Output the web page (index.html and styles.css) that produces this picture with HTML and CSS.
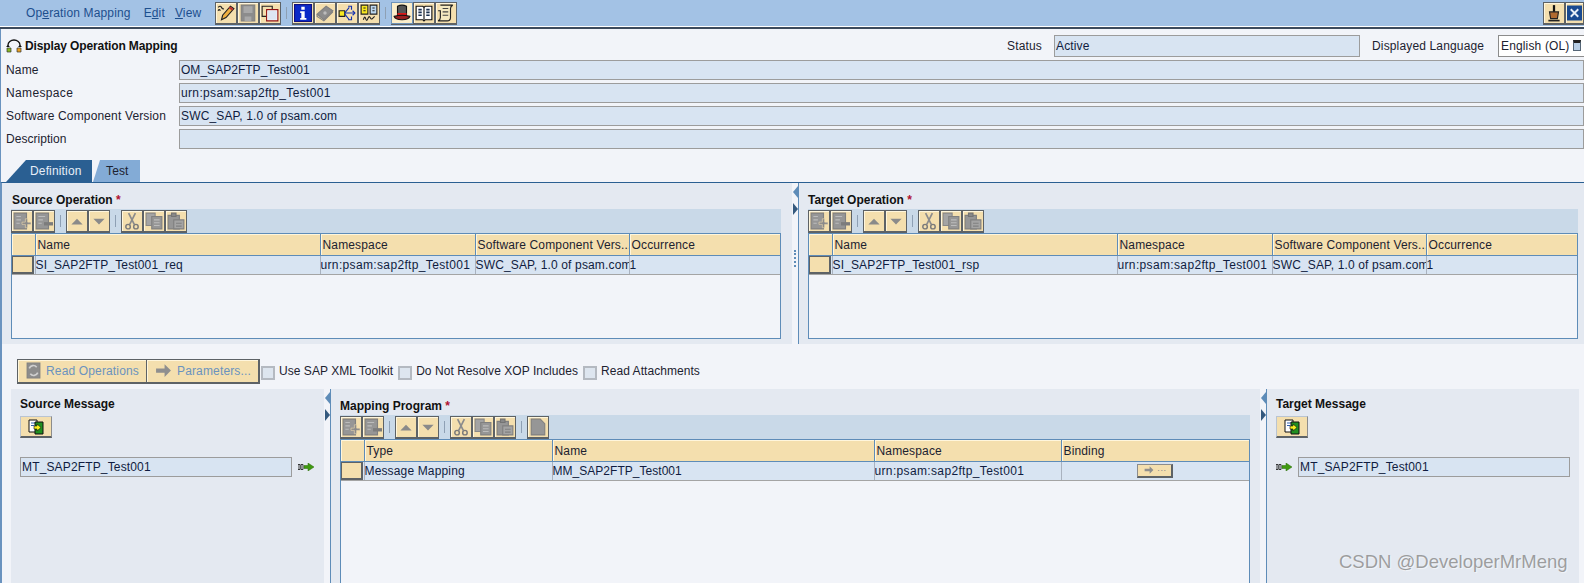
FILE: index.html
```html
<!DOCTYPE html>
<html lang="en">
<head>
    <meta charset="UTF-8">
    <title>Display Operation Mapping</title>
    <link rel="stylesheet" href="styles.css">
</head>
<body>
    <!-- Shared icons -->
    <svg class="defs" width="0" height="0">
        <symbol id="i-edit" viewBox="0 0 16 16">
            <path d="M1 3q2-2 3 0t2 1M1 6q1-2 2 0" fill="none" stroke="#222" stroke-width="1"/>
            <path d="M4 14l1-4 7-8 3 2-7 8z" fill="#f0b040" stroke="#222" stroke-width="1"/>
            <path d="M11 3l3 2" stroke="#c03030" stroke-width="2"/>
        </symbol>
        <symbol id="i-save" viewBox="0 0 16 16">
            <path d="M2 1h12v14H2z" fill="#8c8c8c" stroke="#808080"/>
            <path d="M4 2h8v6H4zM5 11h6v4H5z" fill="#a8a8a8"/>
        </symbol>
        <symbol id="i-pages" viewBox="0 0 16 16">
            <path d="M1 2h9v9H1z" fill="#f4dfae" stroke="#222"/>
            <path d="M5 5h10v10H5z" fill="#fff" stroke="#901010"/>
            <path d="M6 6h8v8H6z" fill="#dde6f2"/>
        </symbol>
        <symbol id="i-info" viewBox="0 0 16 16">
            <path d="M0 0h16v16H0z" fill="#101080"/>
            <path d="M1 1h14v14H1z" fill="#0a2ac8"/>
            <path d="M6.500 2.500h3v2.500h-3zM5.500 6.500h4v6h1.500v1.500H5.500v-1.500h1v-4.500h-1z" fill="#fff"/>
        </symbol>
        <symbol id="i-book-off" viewBox="0 0 16 16">
            <path d="M1 9l8-7 6 4-8 8z" fill="#8c8c8c" stroke="#808080"/>
            <path d="M1 9v2l6 4 8-8" fill="none" stroke="#808080"/>
            <circle cx="8" cy="8" r="1.500" fill="#bbb"/>
        </symbol>
        <symbol id="i-flow" viewBox="0 0 16 16">
            <path d="M1 6h5v5H1z" fill="#f8e820" stroke="#222"/>
            <path d="M6 8l4-5M6 8h9M6 9l4 5" fill="none" stroke="#1030b0"/>
            <path d="M9 2h3v3M13 6l2 2-2 2M9 14h3v-3" fill="none" stroke="#1030b0"/>
        </symbol>
        <symbol id="i-notes" viewBox="0 0 16 16">
            <path d="M1 1h6v8H1z" fill="#f8e820" stroke="#222"/>
            <path d="M9 1h6v8H9z" fill="#bcd8f0" stroke="#222"/>
            <path d="M3 3.500h2M3 6h2M11 3.500h2M11 6h2" stroke="#222"/>
            <path d="M3 14q1-4 2-1t2 0 2-1 2 1 2-2" fill="none" stroke="#222"/>
        </symbol>
        <symbol id="i-hat" viewBox="0 0 16 16">
            <path d="M4 2q4-2 8 0v8H4z" fill="#555" stroke="#111"/>
            <path d="M4 8h8v2.500H4z" fill="#d81818"/>
            <path d="M1 11q7-2 14 0-1 3-7 3t-7-3z" fill="#9a2020" stroke="#111"/>
        </symbol>
        <symbol id="i-open-book" viewBox="0 0 16 16">
            <path d="M1 2h6l1 1 1-1h6v12H9l-1 1-1-1H1z" fill="#fff" stroke="#111"/>
            <path d="M8 3v11" stroke="#111"/>
            <path d="M3 5h3M3 7.500h3M3 10h3M10 5h3M10 7.500h3M10 10h3" stroke="#1a3050" stroke-width="1.500"/>
        </symbol>
        <symbol id="i-scroll" viewBox="0 0 16 16">
            <path d="M3 1h11q-2 1-2 3v8q0 3-3 3H1q2-1 2-3V6H1" fill="#f4e8c0" stroke="#222"/>
            <path d="M5 4h5M5 7h5M5 10h5" stroke="#444"/>
        </symbol>
        <symbol id="i-row-add" viewBox="0 0 16 16">
            <path d="M1 1h11v14H1z" fill="#969696" stroke="#808080"/>
            <path d="M3 4h4M3 7h4M3 10h3" stroke="#bcbcbc"/>
            <path d="M11 6h2v3h3v2h-3v3h-2v-3H8V9h3z" fill="#8a8a8a" stroke="#f4dfae" stroke-width=".5"/>
        </symbol>
        <symbol id="i-row-del" viewBox="0 0 16 16">
            <path d="M1 1h11v14H1z" fill="#969696" stroke="#808080"/>
            <path d="M3 4h6M3 7h4M3 10h3" stroke="#bcbcbc"/>
            <path d="M8 9h8v3H8z" fill="#7c7c7c"/>
        </symbol>
        <symbol id="i-up" viewBox="0 0 16 16"><path d="M3 11l5-5 5 5z" fill="#8a8a8a"/></symbol>
        <symbol id="i-down" viewBox="0 0 16 16"><path d="M3 6h10l-5 5z" fill="#8a8a8a"/></symbol>
        <symbol id="i-cut" viewBox="0 0 16 16">
            <path d="M5 1l5 10M11 1L6 11" fill="none" stroke="#8c8c8c" stroke-width="1.500"/>
            <circle cx="4.500" cy="13" r="2" fill="none" stroke="#7a7a7a" stroke-width="1.300"/>
            <circle cx="11.500" cy="13" r="2" fill="none" stroke="#7a7a7a" stroke-width="1.300"/>
        </symbol>
        <symbol id="i-copy" viewBox="0 0 16 16">
            <path d="M1 1h8v11H1z" fill="#a4a4a4" stroke="#888"/>
            <path d="M6 4h9v11H6z" fill="#969696" stroke="#808080"/>
            <path d="M8 7h5M8 9.500h5M8 12h5" stroke="#bcbcbc"/>
        </symbol>
        <symbol id="i-paste" viewBox="0 0 16 16">
            <path d="M1 3h10v12H1z" fill="#969696" stroke="#808080"/>
            <path d="M4 1h4v3H4z" fill="#888" stroke="#747474"/>
            <path d="M6 7h9v8H6z" fill="#a4a4a4" stroke="#808080"/>
            <path d="M8 10h5M8 12.500h5" stroke="#808080"/>
        </symbol>
        <symbol id="i-doc" viewBox="0 0 16 16">
            <path d="M2 1h8l4 4v10H2z" fill="#969696" stroke="#808080"/>
        </symbol>
        <symbol id="i-pin" viewBox="0 0 16 16">
            <path d="M7 1h2v6H7z" fill="#111"/>
            <path d="M4 7h8l-1 6H5z" fill="#b06a30" stroke="#222"/>
            <path d="M3 14h10v1.500H3z" fill="#222"/>
        </symbol>
        <symbol id="i-close" viewBox="0 0 16 16">
            <path d="M0 0h16v16H0z" fill="#1a4a90"/>
            <path d="M4 4l8 8M12 4l-8 8" stroke="#e8eef6" stroke-width="2"/>
        </symbol>
        <symbol id="i-read" viewBox="0 0 16 16">
            <path d="M2 1h12v14H2z" fill="#8c8c8c" stroke="#808080"/>
            <path d="M4 6a4 4 0 0 1 7-1M12 10a4 4 0 0 1-7 1" fill="none" stroke="#d0d0d0" stroke-width="1.500"/>
        </symbol>
        <symbol id="i-arrow-off" viewBox="0 0 16 16">
            <path d="M1 6h8V2l6 6-6 6v-4H1z" fill="#8f8f8f"/>
        </symbol>
        <symbol id="i-import" viewBox="0 0 16 16">
            <path d="M1 1h8v12H1z" fill="#fff" stroke="#111"/>
            <path d="M3 4h4M3 6.500h3" stroke="#3060b0"/>
            <path d="M7 3h8v12H7z" fill="#209020" stroke="#111"/>
            <path d="M6 7h3V5l4 3.500L9 12v-2H6z" fill="#f8f020" stroke="#111" stroke-width=".6"/>
        </symbol>
        <symbol id="i-go" viewBox="0 0 16 8">
            <path d="M0 1.500h2v5H0zM3 1.500h2v5H3z" fill="none" stroke="#111" stroke-width=".8"/>
            <path d="M6 2.500h4V0l6 4-6 4V5.500H6z" fill="#3f9a10" stroke="#2a6a08" stroke-width=".5"/>
        </symbol>
    </svg>

    <!-- Menu bar -->
    <div class="menubar">
        <div class="menu">
            <a class="menu-item">Op<u>e</u>ration Mapping</a>
            <a class="menu-item">E<u>d</u>it</a>
            <a class="menu-item"><u>V</u>iew</a>
        </div>
        <div class="tb-row">
            <div class="tb-group">
                <span class="tb-btn"><svg><use href="#i-edit"/></svg></span>
                <span class="tb-btn"><svg><use href="#i-save"/></svg></span>
                <span class="tb-btn"><svg><use href="#i-pages"/></svg></span>
            </div>
            <span class="tb-sep"></span>
            <div class="tb-group">
                <span class="tb-btn"><svg><use href="#i-info"/></svg></span>
                <span class="tb-btn"><svg><use href="#i-book-off"/></svg></span>
                <span class="tb-btn"><svg><use href="#i-flow"/></svg></span>
                <span class="tb-btn"><svg><use href="#i-notes"/></svg></span>
            </div>
            <span class="tb-sep"></span>
            <div class="tb-group">
                <span class="tb-btn tb-btn-on"><svg><use href="#i-hat"/></svg></span>
                <span class="tb-btn"><svg><use href="#i-open-book"/></svg></span>
                <span class="tb-btn"><svg><use href="#i-scroll"/></svg></span>
            </div>
        </div>
        <div class="tb-group tb-window">
            <span class="tb-btn"><svg><use href="#i-pin"/></svg></span>
            <span class="tb-btn"><svg><use href="#i-close"/></svg></span>
        </div>
    </div>

    <div class="content">
        <!-- Object header -->
        <div class="title-row">
            <svg class="title-icon" viewBox="0 0 16 14">
                <path d="M2 8V6a6 5 0 0 1 12 0v2" fill="none" stroke="#111" stroke-width="1.300"/>
                <path d="M0 8l2-2 2 2z" fill="#111"/>
                <path d="M12 8l2-2 2 2z" fill="#111"/>
                <path d="M1 9h4v4H1z" fill="#8ab820" stroke="#333" stroke-width=".7"/>
                <path d="M11 9h4v4h-4z" fill="#e8a020" stroke="#333" stroke-width=".7"/>
            </svg>
            <span class="title">Display Operation Mapping</span>
            <span class="status-label">Status</span>
            <div class="field field-status">Active</div>
            <span class="lang-label">Displayed Language</span>
            <div class="lang-select">English (OL)<span class="lang-btn"></span></div>
        </div>

        <div class="form">
            <label>Name</label>
            <div class="field tight">OM_SAP2FTP_Test001</div>
            <label class="wide">Namespace</label>
            <div class="field wide">urn:psam:sap2ftp_Test001</div>
            <label>Software Component Version</label>
            <div class="field">SWC_SAP, 1.0 of psam.com</div>
            <label class="tight">Description</label>
            <div class="field"></div>
        </div>

        <div class="tabs">
            <div class="tab tab-active">Definition</div>
            <div class="tab">Test</div>
        </div>

        <!-- Operations -->
        <div class="tab-body">
            <div class="split split-ops">
                <section class="pane pane-op-left">
                    <h3 class="pane-title">Source Operation <span class="req">*</span></h3>
                    <div class="grid-toolbar">
                        <div class="tb-group"><span class="tb-btn"><svg><use href="#i-row-add"/></svg></span><span class="tb-btn"><svg><use href="#i-row-del"/></svg></span></div>
                        <span class="tb-sep"></span>
                        <div class="tb-group"><span class="tb-btn"><svg><use href="#i-up"/></svg></span><span class="tb-btn"><svg><use href="#i-down"/></svg></span></div>
                        <span class="tb-sep"></span>
                        <div class="tb-group"><span class="tb-btn"><svg><use href="#i-cut"/></svg></span><span class="tb-btn"><svg><use href="#i-copy"/></svg></span><span class="tb-btn"><svg><use href="#i-paste"/></svg></span></div>
                    </div>
                    <div class="grid-frame frame-op">
                        <table class="grid">
                            <colgroup><col class="c-sel"><col class="c-op-name"><col class="c-op-ns"><col class="c-op-swc"><col></colgroup>
                            <tr><th></th><th>Name</th><th>Namespace</th><th>Software Component Vers...</th><th>Occurrence</th></tr>
                            <tr><td class="sel"><span></span></td><td>SI_SAP2FTP_Test001_req</td><td class="wide">urn:psam:sap2ftp_Test001</td><td>SWC_SAP, 1.0 of psam.com</td><td>1</td></tr>
                        </table>
                    </div>
                </section>
                <div class="splitter">
                    <span class="arrow-left"></span>
                    <span class="arrow-right"></span>
                    <span class="grip"></span>
                </div>
                <section class="pane pane-op-right">
                    <h3 class="pane-title">Target Operation <span class="req">*</span></h3>
                    <div class="grid-toolbar">
                        <div class="tb-group"><span class="tb-btn"><svg><use href="#i-row-add"/></svg></span><span class="tb-btn"><svg><use href="#i-row-del"/></svg></span></div>
                        <span class="tb-sep"></span>
                        <div class="tb-group"><span class="tb-btn"><svg><use href="#i-up"/></svg></span><span class="tb-btn"><svg><use href="#i-down"/></svg></span></div>
                        <span class="tb-sep"></span>
                        <div class="tb-group"><span class="tb-btn"><svg><use href="#i-cut"/></svg></span><span class="tb-btn"><svg><use href="#i-copy"/></svg></span><span class="tb-btn"><svg><use href="#i-paste"/></svg></span></div>
                    </div>
                    <div class="grid-frame frame-op">
                        <table class="grid">
                            <colgroup><col class="c-sel"><col class="c-op-name"><col class="c-op-ns"><col class="c-op-swc"><col></colgroup>
                            <tr><th></th><th>Name</th><th>Namespace</th><th>Software Component Vers...</th><th>Occurrence</th></tr>
                            <tr><td class="sel"><span></span></td><td>SI_SAP2FTP_Test001_rsp</td><td class="wide">urn:psam:sap2ftp_Test001</td><td>SWC_SAP, 1.0 of psam.com</td><td>1</td></tr>
                        </table>
                    </div>
                </section>
            </div>

            <!-- Read options -->
            <div class="actions">
                <div class="action-btns">
                    <span class="action-btn btn-read"><svg><use href="#i-read"/></svg>Read Operations</span>
                    <span class="action-btn btn-params"><svg><use href="#i-arrow-off"/></svg>Parameters...</span>
                </div>
                <span class="check"></span><span class="check-text">Use SAP XML Toolkit</span>
                <span class="check"></span><span class="check-text">Do Not Resolve XOP Includes</span>
                <span class="check"></span><span class="check-text">Read Attachments</span>
            </div>

            <!-- Messages and mapping program -->
            <div class="split split-map">
                <section class="pane pane-msg pane-src">
                    <h3 class="pane-title">Source Message</h3>
                    <span class="msg-btn"><svg><use href="#i-import"/></svg></span>
                    <div class="msg-row">
                        <div class="field field-msg">MT_SAP2FTP_Test001</div>
                        <svg class="go-icon"><use href="#i-go"/></svg>
                    </div>
                </section>
                <div class="splitter">
                    <span class="arrow-left"></span>
                    <span class="arrow-right"></span>
                </div>
                <section class="pane pane-mapping">
                    <h3 class="pane-title">Mapping Program <span class="req">*</span></h3>
                    <div class="grid-toolbar">
                        <div class="tb-group"><span class="tb-btn"><svg><use href="#i-row-add"/></svg></span><span class="tb-btn"><svg><use href="#i-row-del"/></svg></span></div>
                        <span class="tb-sep"></span>
                        <div class="tb-group"><span class="tb-btn"><svg><use href="#i-up"/></svg></span><span class="tb-btn"><svg><use href="#i-down"/></svg></span></div>
                        <span class="tb-sep"></span>
                        <div class="tb-group"><span class="tb-btn"><svg><use href="#i-cut"/></svg></span><span class="tb-btn"><svg><use href="#i-copy"/></svg></span><span class="tb-btn"><svg><use href="#i-paste"/></svg></span></div>
                        <span class="tb-sep"></span>
                        <div class="tb-group"><span class="tb-btn"><svg><use href="#i-doc"/></svg></span></div>
                    </div>
                    <div class="grid-frame frame-map">
                        <table class="grid">
                            <colgroup><col class="c-sel"><col class="c-m-type"><col class="c-m-name"><col class="c-m-ns"><col></colgroup>
                            <tr><th></th><th>Type</th><th>Name</th><th>Namespace</th><th>Binding</th></tr>
                            <tr><td class="sel"><span></span></td><td>Message Mapping</td><td class="tight">MM_SAP2FTP_Test001</td><td class="wide">urn:psam:sap2ftp_Test001</td><td class="cell-bind"><span class="bind-btn"><svg><use href="#i-arrow-off"/></svg><i>···</i></span></td></tr>
                        </table>
                    </div>
                </section>
                <div class="splitter">
                    <span class="arrow-left"></span>
                    <span class="arrow-right"></span>
                </div>
                <section class="pane pane-msg pane-tgt">
                    <h3 class="pane-title">Target Message</h3>
                    <span class="msg-btn"><svg><use href="#i-import"/></svg></span>
                    <div class="msg-row">
                        <svg class="go-icon"><use href="#i-go"/></svg>
                        <div class="field field-msg">MT_SAP2FTP_Test001</div>
                    </div>
                </section>
            </div>
        </div>
    </div>

    <div class="watermark">CSDN @DeveloperMrMeng</div>
</body>
</html>
```

FILE: styles.css
```css
* {
    box-sizing: border-box;
}

html, body {
    height: 100%;
}

body {
    margin: 0;
    overflow: hidden;
    background-color: #f2f4f9;
    font-family: "Liberation Sans", Arial, sans-serif;
    font-size: 12px;
    letter-spacing: 0.15px;
    color: #1c2230;
}

.defs {
    position: absolute;
}

.tight {
    letter-spacing: 0.03px;
}

.wide {
    letter-spacing: 0.35px;
}

/* Menu bar */
.menubar {
    height: 29px;
    display: flex;
    align-items: center;
    padding-left: 26px;
    background-color: #a3c2e5;
    background-clip: padding-box;
    border-bottom: 2px solid #3c4a5c;
    box-shadow: inset 0 -1px 0 #ffffff;
}

.menu {
    width: 189px;
    flex: none;
    display: flex;
    gap: 13px;
    margin-top: -1px;
}

.menu-item {
    color: #1d4f8e;
}

.menu-item:last-child {
    margin-left: -3px;
}

/* Toolbars */
.tb-row {
    display: flex;
    align-items: center;
    margin-top: -1px;
}

.tb-group {
    display: flex;
    gap: 2px;
    padding: 1px 1px 2px 1px;
    background-color: #5d6266;
    height: 23px;
}

.tb-btn {
    width: 20px;
    height: 20px;
    display: flex;
    align-items: center;
    justify-content: center;
    background-color: #f4dfae;
    box-shadow: inset 1px 1px 0 #fff6dc;
}

.tb-btn svg {
    width: 18px;
    height: 18px;
}

.tb-btn-on {
    background-color: #fbeecb;
    box-shadow: 0 0 0 1px #6f93b8;
}

.tb-sep {
    width: 1px;
    height: 12px;
    margin: 0 5px;
    background-color: #8ea0b4;
}

.tb-window {
    margin-left: auto;
    margin-top: -1px;
}

.tb-window .tb-btn + .tb-btn {
    width: 17px;
}

.tb-window .tb-btn + .tb-btn svg {
    width: 15px;
    height: 16px;
}

/* Object header */
.content {
    height: 554px;
    box-shadow: inset 1px 0 0 #6a93bf;
}

.title-row {
    height: 31px;
    display: flex;
    align-items: center;
    padding: 3px 0 0 6px;
}

.title-icon {
    width: 16px;
    height: 14px;
    margin-right: 3px;
}

.title {
    font-weight: bold;
    letter-spacing: -0.12px;
    color: #111111;
}

.status-label {
    margin-left: auto;
    margin-right: 12px;
}

.lang-label {
    width: 138px;
    padding-left: 12px;
}

.field {
    height: 20px;
    line-height: 18px;
    padding-left: 1px;
    background-color: #d8e4f2;
    border: 1px solid #9c9c9c;
    color: #101c40;
}

.field-status {
    width: 306px;
    height: 22px;
    line-height: 20px;
}

.lang-select {
    width: 86px;
    height: 22px;
    line-height: 20px;
    padding-left: 2px;
    position: relative;
    background-color: #ffffff;
    border: 1px solid #8c8c8c;
    border-right: 0;
    white-space: nowrap;
}

.lang-btn {
    position: absolute;
    right: 3px;
    top: 4px;
    width: 8px;
    height: 11px;
    background-color: #b8cfe6;
    border: 1px solid #567;
    border-top: 3px solid #222;
}

.form {
    display: grid;
    grid-template-columns: 173px 1fr;
    row-gap: 3px;
    padding-left: 6px;
}

.form label {
    line-height: 20px;
}

/* Tabs */
.tabs {
    display: flex;
    height: 22px;
    margin-top: 11px;
    padding-left: 6px;
    gap: 1px;
}

.tab {
    width: 47px;
    padding-left: 13px;
    line-height: 22px;
    background-color: #83abd6;
    clip-path: polygon(7px 0, 100% 0, 100% 100%, 0 100%);
}

.tab-active {
    width: 86px;
    padding-left: 24px;
    color: #e6eef8;
    background-color: #2a5f92;
    clip-path: polygon(20px 0, 100% 0, 100% 100%, 0 100%);
}

.tab-body {
    height: 401px;
    border-top: 1px solid #2a5f92;
    border-left: 2px solid #6a93bf;
}

/* Panes */
.split {
    display: flex;
}

.split-ops {
    height: 161px;
}

.split-map {
    height: 194px;
    margin-left: 9px;
    margin-right: 5px;
}

.pane {
    background-color: #e4e9f1;
}

.pane-title {
    margin: 0;
    font-size: 12px;
    font-weight: bold;
    letter-spacing: 0;
    line-height: 14px;
    color: #111111;
}

.req {
    color: #b01030;
}

.pane-op-left,
.pane-op-right {
    padding-top: 10px;
}

.pane-op-left {
    width: 790px;
    padding-left: 10px;
    padding-right: 11px;
}

.pane-op-right {
    flex: 1;
    padding-left: 9px;
    padding-right: 6px;
}

.grid-toolbar {
    display: flex;
    align-items: center;
    height: 24px;
    margin-top: 2px;
    margin-left: -1px;
    background-color: #c9d9e8;
}

.pane-op-right .grid-toolbar,
.pane-mapping .grid-toolbar {
    margin-left: 0;
}

.grid-frame {
    margin-left: -1px;
    border: 1px solid #5e8cb8;
    background-color: #f2f4f9;
    overflow: hidden;
}

.pane-op-right .grid-frame,
.pane-mapping .grid-frame {
    margin-left: 0;
}

.frame-op {
    height: 106px;
}

.frame-map {
    height: 160px;
}

/* Grid tables */
.grid {
    width: 100%;
    table-layout: fixed;
    border-collapse: collapse;
}

.c-sel { width: 23px; }
.c-op-name { width: 285px; }
.c-op-ns { width: 155px; }
.c-op-swc { width: 154px; }
.c-m-type { width: 188px; }
.c-m-name { width: 322px; }
.c-m-ns { width: 187px; }

.grid th {
    height: 21px;
    padding: 1px 0 0 2px;
    font-weight: normal;
    text-align: left;
    white-space: nowrap;
    overflow: hidden;
    background-color: #f4dfae;
    border-right: 1px solid #5e8cb8;
    border-bottom: 1px solid #5e8cb8;
    box-shadow: inset 1px 1px 0 #fff6dc;
    color: #1c2230;
}

.grid th:last-child {
    border-right: 0;
}

.grid td {
    height: 19px;
    padding: 0;
    white-space: nowrap;
    overflow: hidden;
    background-color: #d8e4f2;
    border-right: 1px solid #a9b2bf;
    border-bottom: 1px solid #a4a4a4;
    color: #101c40;
}

.grid td:last-child {
    border-right: 0;
}

.grid td.sel {
    padding: 0 1px 0 0;
}

.sel span {
    display: block;
    height: 18px;
    background-color: #f4dfae;
    border: 1px solid #5d6266;
    border-right-width: 2px;
    border-bottom-width: 2px;
}

.cell-bind {
    text-align: center;
}

.bind-btn {
    display: inline-flex;
    align-items: center;
    justify-content: center;
    width: 36px;
    height: 14px;
    vertical-align: middle;
    background-color: #f4dfae;
    border: 1px solid #8c8c8c;
    border-right: 2px solid #5d6266;
    border-bottom: 2px solid #5d6266;
}

.bind-btn svg {
    width: 12px;
    height: 10px;
}

.bind-btn i {
    font-style: normal;
    font-size: 9px;
    color: #8a8a8a;
    margin-left: 2px;
}

/* Splitter */
.splitter {
    width: 7px;
    flex: none;
    padding-top: 3px;
    border-right: 1px solid #5e8cb8;
    display: flex;
    flex-direction: column;
    align-items: flex-end;
}

.arrow-left,
.arrow-right {
    display: block;
    width: 0;
    height: 0;
    border-top: 6px solid transparent;
    border-bottom: 6px solid transparent;
}

.arrow-left {
    border-right: 5px solid #5e8cb8;
}

.arrow-right {
    margin-top: 5px;
    border-left: 5px solid #34597e;
}

.grip {
    margin-top: 35px;
    margin-right: 2px;
    height: 17px;
    width: 2px;
    border-left: 2px dotted #5e8cb8;
}

/* Read options */
.actions {
    height: 45px;
    display: flex;
    align-items: center;
    padding-left: 15px;
}

.action-btns {
    display: flex;
    margin-top: 9px;
    height: 25px;
    background-color: #5d6266;
    padding: 1px 2px 2px 1px;
    gap: 1px;
}

.action-btn {
    display: flex;
    align-items: center;
    color: #6a93bf;
    background-color: #f4dfae;
    box-shadow: inset 1px 1px 0 #fff6dc;
}

.action-btn svg {
    width: 17px;
    height: 17px;
    margin: 0 4px 0 7px;
}

.btn-read {
    width: 128px;
}

.btn-params {
    width: 111px;
}

.btn-params svg {
    margin: 0 5px 0 8px;
    width: 17px;
}

.check {
    width: 14px;
    height: 14px;
    margin: 13px 4px 0 0;
    background-color: #dde5ef;
    border: 2px solid #b4b9c1;
}

.action-btns + .check {
    margin-left: 1px;
}

.check-text {
    margin: 9px 5px 0 0;
    white-space: nowrap;
    letter-spacing: 0.05px;
}

/* Messages and mapping */
.pane-msg {
    width: 313px;
    flex: none;
    padding: 8px 9px;
}

.pane-tgt {
    width: 312px;
}

.pane-mapping {
    flex: 1;
    padding: 10px 10px 0 9px;
}

.msg-btn {
    display: flex;
    width: 32px;
    height: 22px;
    margin-top: 5px;
    align-items: center;
    justify-content: center;
    background-color: #f4dfae;
    border: 1px solid #b9c4d2;
    border-bottom: 2px solid #5d6266;
    border-right: 1px solid #8c8c8c;
}

.msg-btn svg {
    width: 16px;
    height: 16px;
}

.msg-row {
    display: flex;
    align-items: center;
    margin-top: 19px;
    gap: 6px;
}

.field-msg {
    width: 272px;
    flex: none;
}

.go-icon {
    width: 16px;
    height: 8px;
    flex: none;
}

.watermark {
    position: absolute;
    left: 1339px;
    top: 551px;
    font-size: 18.5px;
    letter-spacing: 0;
    color: rgba(130, 130, 130, 0.75);
    text-shadow: 1px 1px 1px rgba(255, 255, 255, 0.6);
}
```
